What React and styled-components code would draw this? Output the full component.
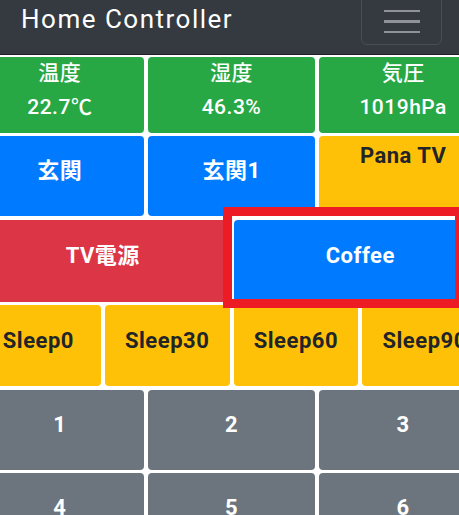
import styled, { createGlobalStyle } from 'styled-components';

const GlobalStyle = createGlobalStyle`
    html, body {
        margin: 0;
        padding: 0;
        background: #fff;
    }
    body {
        font-family: Roboto, "Noto Sans CJK JP", "Liberation Sans", sans-serif;
    }
`

const colors = {
    success: { bg: '#28a745', fg: '#fff' },
    primary: { bg: '#007bff', fg: '#fff' },
    warning: { bg: '#ffc107', fg: '#212529' },
    danger: { bg: '#dc3545', fg: '#fff' },
    secondary: { bg: '#6c757d', fg: '#fff' },
}

const Page = styled.div`
    position: relative;
    width: 459px;
    height: 515px;
    overflow: hidden;
`

const Navbar = styled.nav`
    height: 54px;
    background: #343a40;
    border-bottom: 1px solid #1c1f2b;
    display: flex;
    justify-content: space-between;
    align-items: flex-start;
    padding: 0 17px 0 21px;
`

const Brand = styled.div`
    color: #fff;
    font-family: Roboto, "Liberation Sans", sans-serif;
    font-size: 26px;
    letter-spacing: 1.5px;
    line-height: 36px;
    margin-top: 1px;
`

const Toggler = styled.button`
    width: 81px;
    height: 56px;
    margin-top: -11px;
    background: transparent;
    border: 1px solid rgba(255, 255, 255, 0.1);
    border-radius: 6px;
    display: flex;
    flex-direction: column;
    align-items: center;
    gap: 8px;
    padding: 20px 0 0;
`

const Bar = styled.span`
    display: block;
    width: 36px;
    height: 2.3px;
    background: #8f9296;
`

const Board = styled.div`
    margin: 1.5px 0 0 -24px;
    width: 511px;
    display: flex;
    flex-direction: column;
    gap: 3.5px;
`

const Row = styled.div`
    display: grid;
    grid-template-columns: repeat(${p => p.$cols}, 1fr);
    gap: 4px;
    height: ${p => p.$h}px;
`

const Btn = styled.div`
    background: ${p => colors[p.$v].bg};
    color: ${p => colors[p.$v].fg};
    border-radius: 4px;
    display: flex;
    flex-direction: column;
    align-items: center;
    justify-content: ${p => p.$top ? 'flex-start' : 'center'};
    padding: ${p => p.$top ? '3px 0 0' : '0 0 10px'};
    font-size: 22px;
    font-weight: 700;
    letter-spacing: 0.5px;
    line-height: 34px;
    white-space: nowrap;
    overflow: hidden;
`

const Sensor = styled(Btn)`
    font-size: 21px;
    font-weight: 500;
`

const Highlight = styled.div`
    position: absolute;
    left: 223px;
    top: 207px;
    width: 241px;
    height: 101px;
    box-sizing: border-box;
    border: 9px solid #ed1c24;
    pointer-events: none;
`

const sensors = [
    { label: '温度', value: '22.7℃' },
    { label: '湿度', value: '46.3%' },
    { label: '気圧', value: '1019hPa' },
]

const sleeps = ['Sleep0', 'Sleep30', 'Sleep60', 'Sleep90']

const App = () => {
    return (
        <Page>
            <GlobalStyle />
            <Navbar>
                <Brand>Home Controller</Brand>
                <Toggler aria-label="menu">
                    <Bar /><Bar /><Bar />
                </Toggler>
            </Navbar>
            <Board>
                <Row $cols={3} $h={76}>
                    {sensors.map(s => (
                        <Sensor key={s.label} $v="success">
                            <span>{s.label}</span>
                            <span>{s.value}</span>
                        </Sensor>
                    ))}
                </Row>
                <Row $cols={3} $h={80}>
                    <Btn $v="primary">玄関</Btn>
                    <Btn $v="primary">玄関1</Btn>
                    <Btn $v="warning" $top>Pana TV</Btn>
                </Row>
                <Row $cols={2} $h={82}>
                    <Btn $v="danger">TV電源</Btn>
                    <Btn $v="primary">Coffee</Btn>
                </Row>
                <Row $cols={4} $h={81}>
                    {sleeps.map(s => <Btn key={s} $v="warning">{s}</Btn>)}
                </Row>
                <Row $cols={3} $h={80}>
                    {['1', '2', '3'].map(n => <Btn key={n} $v="secondary">{n}</Btn>)}
                </Row>
                <Row $cols={3} $h={80}>
                    {['4', '5', '6'].map(n => <Btn key={n} $v="secondary">{n}</Btn>)}
                </Row>
            </Board>
            <Highlight />
        </Page>
    )
}

export default App;
